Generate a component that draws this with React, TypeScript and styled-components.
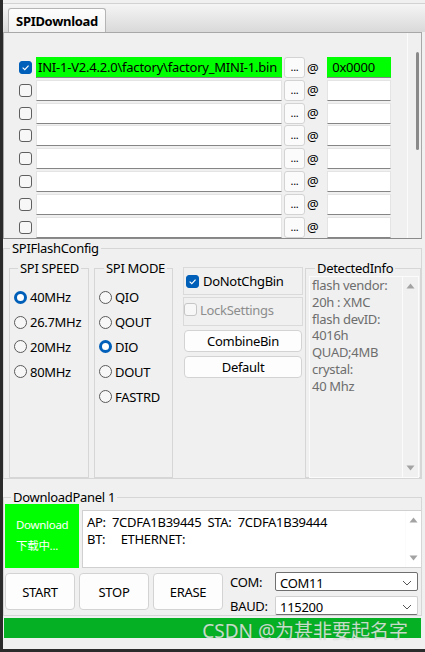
import React from 'react'
import styled, { createGlobalStyle } from 'styled-components'

const GlobalStyle = createGlobalStyle`
  html, body {
    margin: 0;
    padding: 0;
    background: #f0f0f0;
  }
  body {
    font-family: "Noto Sans", "Noto Sans CJK SC", sans-serif;
    font-size: 13px;
    letter-spacing: -0.3px;
    color: #000;
  }
`

const Window = styled.div`
  width: 425px;
  height: 652px;
  box-sizing: border-box;
  border-left: 3px solid #2b2b2b;
  border-bottom: 3px solid #2b2b2b;
  background: #f0f0f0;
  display: flex;
  flex-direction: column;
  overflow: hidden;
`

const TabStrip = styled.div`
  height: 28px;
  margin-top: 3px;
  border-top: 1px solid #d2d2d2;
  background: linear-gradient(#f5f5f5, #d9d9d9);
  display: flex;
  align-items: flex-end;
  padding-left: 5px;
`

const Tab = styled.div`
  width: 98px;
  height: 24px;
  box-sizing: border-box;
  border: 1px solid #b5b5b5;
  border-bottom: none;
  border-radius: 3px 3px 0 0;
  background: linear-gradient(#fdfdfd, #f3f3f3);
  font-weight: 700;
  display: flex;
  align-items: center;
  justify-content: center;
`

const Panel = styled.div`
  height: 207px;
  box-sizing: border-box;
  margin-right: 3px;
  border: 1px solid #a8a8a8;
  border-bottom-color: #8a8a8a;
  display: flex;
  overflow: hidden;
`

const FileList = styled.div`
  flex: 1;
  padding: 24px 0 0 15px;
  display: flex;
  flex-direction: column;
  gap: 1.8px;
`

const FileRow = styled.div`
  display: flex;
  align-items: center;
  height: 21px;
  flex: none;
`

const Field = styled.div<{ $active?: boolean; $width: number; $lead?: number }>`
  width: ${p => p.$width}px;
  height: 21px;
  box-sizing: border-box;
  margin-left: ${p => p.$lead ?? 0}px;
  border: 1px solid ${p => (p.$active ? '#00ff00' : '#e4e4e4')};
  border-bottom-color: #858585;
  background: ${p => (p.$active ? '#00ff00' : '#fff')};
  padding: 0 1px;
  line-height: 19px;
  letter-spacing: -0.22px;
  white-space: nowrap;
  overflow: hidden;
  flex: none;
`

const BrowseButton = styled.div`
  width: 21px;
  height: 21px;
  box-sizing: border-box;
  margin-left: 2px;
  border: 1px solid #d3d3d3;
  border-radius: 3px;
  background: #fbfbfb;
  font-size: 11px;
  line-height: 17px;
  text-align: center;
  flex: none;
`

const AtSign = styled.span`
  width: 22px;
  padding-left: 2px;
  box-sizing: border-box;
  flex: none;
`

const ListScroll = styled.div`
  width: 14px;
  border-left: 1px solid #fbfbfb;
  padding: 19px 0 0 8px;
  box-sizing: border-box;
`

const Thumb = styled.div`
  width: 3px;
  height: 98px;
  border-radius: 2px;
  background: #8a8a8a;
`

const CheckSquare = styled.span<{ $checked?: boolean; $disabled?: boolean }>`
  width: 13px;
  height: 13px;
  box-sizing: border-box;
  flex: none;
  border-radius: 3px;
  border: 1px solid ${p => (p.$checked ? '#005fb8' : p.$disabled ? '#c6c6c6' : '#5f5f5f')};
  background: ${p => (p.$checked ? '#005fb8' : '#f7f7f7')};
  display: flex;
  align-items: center;
  justify-content: center;
`

const Group = styled.fieldset<{ $width?: number; $height: number }>`
  margin: 0;
  padding: 0;
  min-width: 0;
  box-sizing: border-box;
  border: 1px solid #d6d6d6;
  width: ${p => (p.$width ? `${p.$width}px` : 'auto')};
  height: ${p => p.$height}px;
  flex: none;
`

const Legend = styled.legend<{ $indent?: number }>`
  padding: 0 2px;
  margin-left: ${p => p.$indent ?? 6}px;
  line-height: 16px;
  font-size: 13px;
`

const FlashGroup = styled(Group)`
  margin: 1px 3px 0 0;
`

const FlashBody = styled.div`
  display: flex;
  padding: 4px 0 0 5px;
`

const OptionGroup = styled(Group)<{ $gap?: number }>`
  margin-left: ${p => p.$gap ?? 0}px;
  padding: 9px 0 0 4px;
`

const RadioRow = styled.div`
  display: flex;
  align-items: center;
  height: 24.8px;
  gap: 3px;
`

const RadioCircle = styled.span<{ $checked?: boolean }>`
  width: 13px;
  height: 13px;
  box-sizing: border-box;
  border-radius: 50%;
  flex: none;
  border: ${p => (p.$checked ? '3.5px solid #005fb8' : '1px solid #5a5a5a')};
  background: ${p => (p.$checked ? '#fff' : '#f7f7f7')};
`

const ToolColumn = styled.div`
  width: 133px;
  padding: 7px 0 0 10px;
  box-sizing: border-box;
  display: flex;
  flex-direction: column;
`

const CheckFrame = styled.div<{ $disabled?: boolean; $height: number }>`
  width: 120px;
  height: ${p => p.$height}px;
  box-sizing: border-box;
  border: 1px solid #dadada;
  display: flex;
  align-items: center;
  gap: ${p => (p.$disabled ? 3 : 4)}px;
  padding: ${p => (p.$disabled ? '0 0 4px 0' : '0 0 0 2px')};
  color: ${p => (p.$disabled ? '#8d8d8d' : '#000')};
  margin-bottom: 2px;
`

const ToolButton = styled.div`
  width: 118px;
  height: 22px;
  box-sizing: border-box;
  margin: 2px 0 2px 1px;
  border: 1px solid #d3d3d3;
  border-radius: 4px;
  background: #fdfdfd;
  line-height: 20px;
  text-align: center;
`

const InfoGroup = styled(Group)`
  padding: 0 0 0 3px;
  display: flex;
`

const InfoBox = styled.div`
  width: 110px;
  height: 202px;
  box-sizing: border-box;
  border: 1px solid #fbfbfb;
  display: flex;
`

const InfoText = styled.div`
  flex: 1;
  padding: 0 0 0 2px;
  color: #6d6d6d;
  line-height: 16.8px;
`

const VScroll = styled.div`
  width: 16px;
  border-left: 1px solid #fbfbfb;
  display: flex;
  flex-direction: column;
  justify-content: space-between;
  align-items: center;
  padding: 6px 0 6px 0;
  box-sizing: border-box;
`

const DownloadGroup = styled(Group)`
  margin: 10px 3px 0 0;
  padding: 0 0 0 1px;
`

const StatusRow = styled.div`
  display: flex;
  align-items: flex-start;
  height: 64px;
  margin-top: -1px;
`

const StateBadge = styled.div`
  width: 74px;
  height: 64px;
  background: #00ff00;
  color: #fff;
  font-size: 11.5px;
  line-height: 21px;
  padding: 10px 0 0 11px;
  box-sizing: border-box;
`

const MacBox = styled.div`
  flex: 1;
  height: 58px;
  margin: 6px 0 0 3px;
  box-sizing: border-box;
  border: 1px solid #d0d0d0;
  border-right: none;
  background: #fff;
  display: flex;
`

const MacText = styled.div`
  flex: 1;
  padding: 3px 0 0 4px;
  line-height: 17px;
  white-space: pre;
`

const ControlRow = styled.div`
  display: flex;
  margin-top: 5px;
`

const ActionButton = styled.div`
  width: 70px;
  height: 37px;
  box-sizing: border-box;
  margin-right: 4px;
  border: 1px solid #d3d3d3;
  border-radius: 4px;
  background: #fdfdfd;
  display: flex;
  align-items: center;
  justify-content: center;
`

const PortGrid = styled.div`
  display: grid;
  grid-template-columns: 45px 143px;
  row-gap: 5px;
  align-items: center;
  margin: -1px 0 0 3px;
`

const Combo = styled.div<{ $focused?: boolean }>`
  height: 19px;
  box-sizing: border-box;
  border: 1px solid ${p => (p.$focused ? '#6f6f6f' : '#d0d0d0')};
  border-bottom-color: #6f6f6f;
  border-radius: 2px;
  background: #fff;
  display: flex;
  align-items: center;
  justify-content: space-between;
  padding: 2px 5px 0 4px;
`

const Progress = styled.div`
  height: 20px;
  margin: 2px 4px 0 1px;
  background: #06b025;
  display: flex;
  justify-content: flex-end;
  padding-right: 13px;
`

const Watermark = styled.span`
  font-size: 19px;
  line-height: 20px;
  padding-top: 3px;
  letter-spacing: 0;
  color: rgba(235, 240, 235, 0.82);
  text-shadow: 0 0 1px rgba(90, 90, 90, 0.4);
  white-space: nowrap;
`

const Tick = () => (
  <svg width="9" height="9" viewBox="0 0 10 10">
    <path d="M1.8 5.2 L4.2 7.4 L8.4 2.8" fill="none" stroke="#fff" strokeWidth="1.3" />
  </svg>
)

const Check = ({ checked, disabled }: { checked?: boolean; disabled?: boolean }) => (
  <CheckSquare $checked={checked} $disabled={disabled}>{checked && <Tick />}</CheckSquare>
)

const Arrow = ({ up }: { up?: boolean }) => (
  <svg width="9" height="6" viewBox="0 0 9 6">
    <polygon points={up ? '4.5,0.5 8.5,5.5 0.5,5.5' : '0.5,0.5 8.5,0.5 4.5,5.5'} fill="#a3a3a3" />
  </svg>
)

const Chevron = () => (
  <svg width="10" height="6" viewBox="0 0 10 6">
    <polyline points="1,1 5,5 9,1" fill="none" stroke="#555" strokeWidth="1" />
  </svg>
)

const Radio = ({ label, checked }: { label: string; checked?: boolean }) => (
  <RadioRow>
    <RadioCircle $checked={checked} />
    {label}
  </RadioRow>
)

const files = [
  { on: true, path: 'INI-1-V2.4.2.0\\factory\\factory_MINI-1.bin', addr: '0x0000' },
  ...Array.from({ length: 7 }, () => ({ on: false, path: '', addr: '' })),
]

const speeds = ['40MHz', '26.7MHz', '20MHz', '80MHz']
const modes = ['QIO', 'QOUT', 'DIO', 'DOUT', 'FASTRD']
const detected = ['flash vendor:', '20h : XMC', 'flash devID:', '4016h', 'QUAD;4MB', 'crystal:', '40 Mhz']

const App = () => {
  return (
    <Window>
      <GlobalStyle />
      <TabStrip>
        <Tab>SPIDownload</Tab>
      </TabStrip>

      <Panel>
        <FileList>
          {files.map((f, i) => (
            <FileRow key={i}>
              <Check checked={f.on} />
              <Field $width={246} $active={f.on} $lead={4}>{f.path}</Field>
              <BrowseButton>...</BrowseButton>
              <AtSign>@</AtSign>
              <Field $width={64} $active={f.on}>&nbsp;{f.addr}</Field>
            </FileRow>
          ))}
        </FileList>
        <ListScroll>
          <Thumb />
        </ListScroll>
      </Panel>

      <FlashGroup $height={239}>
        <Legend>SPIFlashConfig</Legend>
        <FlashBody>
          <OptionGroup $width={80} $height={218}>
            <Legend $indent={4}>SPI SPEED</Legend>
            {speeds.map(s => (
              <Radio key={s} label={s} checked={s === '40MHz'} />
            ))}
          </OptionGroup>
          <OptionGroup $width={79} $height={218} $gap={5}>
            <Legend $indent={5}>SPI MODE</Legend>
            {modes.map(m => (
              <Radio key={m} label={m} checked={m === 'DIO'} />
            ))}
          </OptionGroup>
          <ToolColumn>
            <CheckFrame $height={28}>
              <Check checked />
              DoNotChgBin
            </CheckFrame>
            <CheckFrame $height={29} $disabled>
              <Check disabled />
              LockSettings
            </CheckFrame>
            <ToolButton>CombineBin</ToolButton>
            <ToolButton>Default</ToolButton>
          </ToolColumn>
          <InfoGroup $width={116} $height={218}>
            <Legend $indent={6}>DetectedInfo</Legend>
            <InfoBox>
              <InfoText>
                {detected.map(d => (
                  <div key={d}>{d}</div>
                ))}
              </InfoText>
              <VScroll>
                <Arrow up />
                <Arrow />
              </VScroll>
            </InfoBox>
          </InfoGroup>
        </FlashBody>
      </FlashGroup>

      <DownloadGroup $height={127}>
        <Legend>DownloadPanel 1</Legend>
        <StatusRow>
          <StateBadge>
            <div>Download</div>
            <div>下载中...</div>
          </StateBadge>
          <MacBox>
            <MacText>
              {'AP:  7CDFA1B39445  STA:  7CDFA1B39444\nBT:     ETHERNET:'}
            </MacText>
            <VScroll>
              <Arrow up />
              <Arrow />
            </VScroll>
          </MacBox>
        </StatusRow>
        <ControlRow>
          <ActionButton>START</ActionButton>
          <ActionButton>STOP</ActionButton>
          <ActionButton>ERASE</ActionButton>
          <PortGrid>
            <span>COM:</span>
            <Combo $focused>
              COM11
              <Chevron />
            </Combo>
            <span>BAUD:</span>
            <Combo>
              115200
              <Chevron />
            </Combo>
          </PortGrid>
        </ControlRow>
      </DownloadGroup>

      <Progress>
        <Watermark>CSDN @为甚非要起名字</Watermark>
      </Progress>
    </Window>
  )
}

export default App
